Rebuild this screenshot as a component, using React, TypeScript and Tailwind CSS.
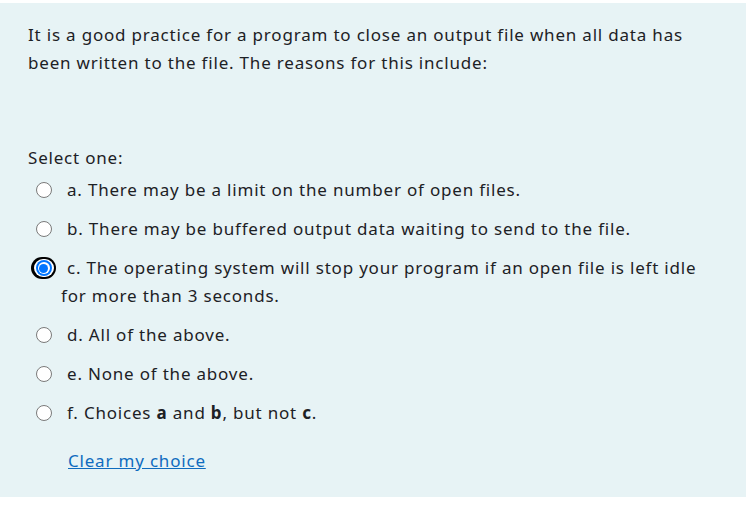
import React, { useState } from 'react';

const options = [
  { id: 'a', label: <>a. There may be a limit on the number of open files.</> },
  { id: 'b', label: <>b. There may be buffered output data waiting to send to the file.</> },
  {
    id: 'c',
    label: <>c. The operating system will stop your program if an open file is left idle for more than 3 seconds.</>,
  },
  { id: 'd', label: <>d. All of the above.</> },
  { id: 'e', label: <>e. None of the above.</> },
  {
    id: 'f',
    label: (
      <>
        f. Choices <b>a</b> and <b>b</b>, but not <b>c</b>.
      </>
    ),
  },
];

function Radio({ checked }: { checked: boolean }) {
  if (checked) {
    return (
      <span className="w-[25px] h-[22px] rounded-full bg-black flex items-center justify-center shrink-0">
        <span className="w-[20px] h-[18px] rounded-full bg-white flex items-center justify-center">
          <span className="w-[16px] h-[16px] rounded-full bg-[#0075ff] flex items-center justify-center">
            <span className="w-[12px] h-[12px] rounded-full bg-white flex items-center justify-center">
              <span className="w-[9px] h-[9px] rounded-full bg-[#0075ff]" />
            </span>
          </span>
        </span>
      </span>
    );
  }
  return <span className="w-[16px] h-[16px] rounded-full border-[1.5px] border-[#7a7a7a] bg-white shrink-0" />;
}

export default function App() {
  const [selected, setSelected] = useState<string | null>('c');

  return (
    <div className="w-[747px] h-[507px] bg-white pt-[3px] font-['Noto_Sans',sans-serif] text-[17px] tracking-[0.8px] text-[#1d2125]">
      <div className="w-[746px] h-[494px] bg-[#e7f3f5] pl-[28px] pr-4 pt-[18px]">
        <p className="leading-[28px] w-[690px]">
          It is a good practice for a program to close an output file when all data has been written to the file. The
          reasons for this include:
        </p>
        <div className="mt-[67px] leading-[28px]">Select one:</div>
        <div className="flex flex-col gap-[11px] mt-[4px]">
          {options.map((o) => (
            <label key={o.id} className="flex items-start cursor-pointer" onClick={() => setSelected(o.id)}>
              <span className="w-[31px] h-[28px] flex items-center justify-center shrink-0">
                <Radio checked={selected === o.id} />
              </span>
              <span className="leading-[28px] w-[660px] pl-[2px] indent-[6px]">{o.label}</span>
            </label>
          ))}
        </div>
        <a
          href="#"
          onClick={(e) => {
            e.preventDefault();
            setSelected(null);
          }}
          className="inline-block mt-[20px] ml-[40px] leading-[28px] text-[#0f6cbf] underline"
        >
          Clear my choice
        </a>
      </div>
    </div>
  );
}
